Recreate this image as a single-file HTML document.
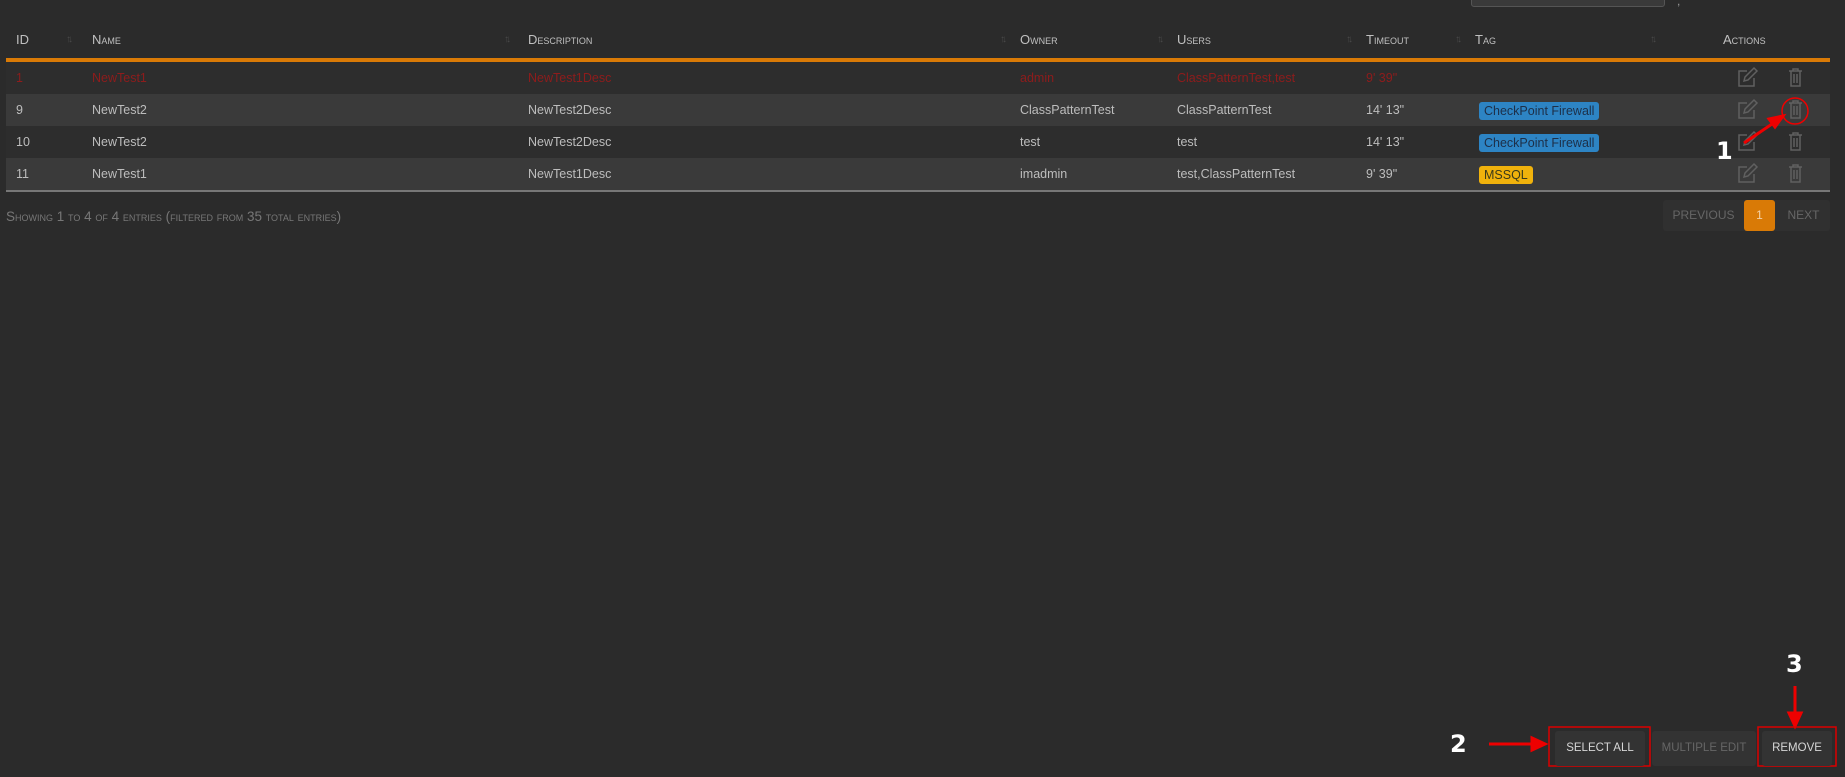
<!DOCTYPE html>
<html><head><meta charset="utf-8"><style>
*{box-sizing:border-box;margin:0;padding:0}
body{width:1845px;height:777px;background:#2b2b2b;font-family:"Liberation Sans",sans-serif;color:#bdbdbd;position:relative;overflow:hidden;font-size:12px}
.a{position:absolute;white-space:nowrap}
.h{font-variant:small-caps;font-size:13px;color:#c0c0c0;top:32px}
.row{position:absolute;left:6px;width:1824px;height:32px}
.c{position:absolute;line-height:32px;font-size:12.5px;white-space:nowrap}
.red .c{color:#8e1c1c}
.tag{position:absolute;top:8px;height:18px;line-height:18px;border-radius:3px;padding:0 5px;font-size:12.5px}
.btn{position:absolute;top:731px;height:35px;line-height:35px;background:#333;border-radius:3px;text-align:center;font-size:11.5px;color:#d6d6d6}
.srt{position:absolute;top:34px;color:#4a4a4a;font-size:10px;letter-spacing:-3px}
.num{position:absolute;color:#fff;font-weight:bold;font-size:24px;font-family:"DejaVu Sans",sans-serif}
</style></head><body>
<div class="a" style="left:1471px;top:-4px;width:194px;height:11px;border:1px solid #555;background:#3a3a3a;border-radius:3px"></div>
<div class="a" style="left:1677px;top:-6px;color:#999">,</div>

<div class="a h" style="left:16px">ID</div>
<div class="a h" style="left:92px">Name</div>
<div class="a h" style="left:528px">Description</div>
<div class="a h" style="left:1020px">Owner</div>
<div class="a h" style="left:1177px">Users</div>
<div class="a h" style="left:1366px">Timeout</div>
<div class="a h" style="left:1475px">Tag</div>
<div class="a h" style="left:1723px">Actions</div>
<div class="srt" style="left:66px">↑↓</div><div class="srt" style="left:504px">↑↓</div><div class="srt" style="left:1000px">↑↓</div><div class="srt" style="left:1157px">↑↓</div><div class="srt" style="left:1346px">↑↓</div><div class="srt" style="left:1455px">↑↓</div><div class="srt" style="left:1650px">↑↓</div>

<div class="a" style="left:6px;top:58px;width:1824px;height:4px;background:#d97a06"></div>

<div class="row red" style="top:62px;background:#2d2d2d"><span class="c" style="left:10px">1</span><span class="c" style="left:86px">NewTest1</span><span class="c" style="left:522px">NewTest1Desc</span><span class="c" style="left:1014px">admin</span><span class="c" style="left:1171px">ClassPatternTest,test</span><span class="c" style="left:1360px">9' 39"</span></div>
<div class="row" style="top:94px;background:#3a3a3a"><span class="c" style="left:10px">9</span><span class="c" style="left:86px">NewTest2</span><span class="c" style="left:522px">NewTest2Desc</span><span class="c" style="left:1014px">ClassPatternTest</span><span class="c" style="left:1171px">ClassPatternTest</span><span class="c" style="left:1360px">14' 13"</span><span class="tag" style="left:1473px;background:#2d84c4;color:#1d2f48">CheckPoint Firewall</span></div>
<div class="row" style="top:126px;background:#2d2d2d"><span class="c" style="left:10px">10</span><span class="c" style="left:86px">NewTest2</span><span class="c" style="left:522px">NewTest2Desc</span><span class="c" style="left:1014px">test</span><span class="c" style="left:1171px">test</span><span class="c" style="left:1360px">14' 13"</span><span class="tag" style="left:1473px;background:#2d84c4;color:#1d2f48">CheckPoint Firewall</span></div>
<div class="row" style="top:158px;background:#3a3a3a"><span class="c" style="left:10px">11</span><span class="c" style="left:86px">NewTest1</span><span class="c" style="left:522px">NewTest1Desc</span><span class="c" style="left:1014px">imadmin</span><span class="c" style="left:1171px">test,ClassPatternTest</span><span class="c" style="left:1360px">9' 39"</span><span class="tag" style="left:1473px;background:#f0b20c;color:#3a3a1a">MSSQL</span></div>
<div class="a" style="left:6px;top:190px;width:1824px;height:2px;background:#777"></div>

<svg class="a" style="left:0;top:0" width="1845" height="777">
<g fill="none" stroke="#606060" stroke-width="1.5">
<g id="e"><path d="M1747 71h-8v15h15v-8"/><path d="M1744 81l1-4 9-9 3 3-9 9z"/></g>
<use href="#e" y="32"/><use href="#e" y="64"/><use href="#e" y="96"/>
<g id="t"><path d="M1789 71h13M1791 71v15h9v-15M1794 74v9M1797 74v9M1793 71v-2h5v2"/></g>
<use href="#t" y="32"/><use href="#t" y="64"/><use href="#t" y="96"/>
</g>
<circle cx="1795" cy="111" r="13" fill="none" stroke="#e00" stroke-width="1.5"/>
<g stroke="#e00" stroke-width="3" fill="#e00">
<path d="M1744 143l28-19"/><path d="M1783 116l-14 3 6 8z"/>
<path d="M1489 744h44"/><path d="M1545 744l-13-6v12z"/>
<path d="M1795 686v28"/><path d="M1795 726l-6-13h12z"/>
</g>
<rect x="1549" y="727" width="101" height="39" fill="none" stroke="#d00" stroke-width="1.5"/>
<rect x="1758" y="727" width="78" height="39" fill="none" stroke="#d00" stroke-width="1.5"/>
</svg>
<div class="num" style="left:1716px;top:137px">1</div>
<div class="num" style="left:1450px;top:730px">2</div>
<div class="num" style="left:1786px;top:650px">3</div>

<div class="a" style="left:6px;top:209px;font-variant:small-caps;font-size:13.5px;color:#777">Showing 1 to 4 of 4 entries (filtered from 35 total entries)</div>

<div class="a" style="left:1663px;top:200px;width:167px;height:31px;background:#303030;border-radius:3px"></div>
<div class="a" style="left:1663px;top:200px;width:81px;line-height:31px;text-align:center;font-size:12px;color:#666">PREVIOUS</div>
<div class="a" style="left:1744px;top:200px;width:31px;height:31px;line-height:31px;text-align:center;background:#d97a06;color:#f3d2a8;font-size:12px;border-radius:3px">1</div>
<div class="a" style="left:1777px;top:200px;width:53px;line-height:31px;text-align:center;font-size:12px;color:#666">NEXT</div>

<div class="btn" style="left:1555px;width:90px">SELECT ALL</div>
<div class="btn" style="left:1652px;width:104px;color:#666">MULTIPLE EDIT</div>
<div class="btn" style="left:1762px;width:70px">REMOVE</div>
</body></html>
